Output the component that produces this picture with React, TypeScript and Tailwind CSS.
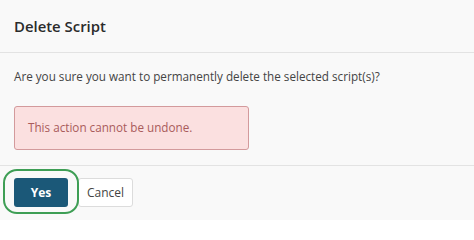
export default function App() {
  return (
    <div
      className="flex h-[220px] w-[474px] flex-col overflow-hidden bg-[#f9f9f9] text-[#333]"
      style={{ fontFamily: '"Open Sans", "Noto Sans", sans-serif' }}
    >
      <div className="flex h-[53px] shrink-0 items-center border-b border-[#e3e3e3] px-[14px] pt-[1px]">
        <h2 className="text-[14.9px] font-semibold text-[#2b2b2b]">Delete Script</h2>
      </div>
      <div className="flex h-[113px] shrink-0 flex-col border-b border-[#e3e3e3] px-[14px] pt-[13px]">
        <p className="text-[11.7px] leading-[20px] text-[#444]">
          Are you sure you want to permanently delete the selected script(s)?
        </p>
        <div className="mt-[20px] flex h-[44px] w-[235px] items-center rounded-[3px] border border-[#d39a9c] bg-[#fbe0e0] px-[13px] text-[11.7px] text-[#a95b5b]">
          This action cannot be undone.
        </div>
      </div>
      <div className="flex items-center gap-[10px] px-[14px] pt-[12px]">
        <div className="relative">
          <span className="pointer-events-none absolute -top-[9px] -bottom-[7px] -left-[11px] -right-[11px] rounded-[14px] border-2 border-[#3e9e55]" />
          <button className="h-[29px] w-[54px] rounded-[3px] bg-[#1b5878] text-[12px] font-bold text-white">
            Yes
          </button>
        </div>
        <button className="h-[29px] w-[55px] rounded-[3px] border border-[#dcdcdc] bg-white text-[12px] text-[#444]">
          Cancel
        </button>
      </div>
    </div>
  )
}
